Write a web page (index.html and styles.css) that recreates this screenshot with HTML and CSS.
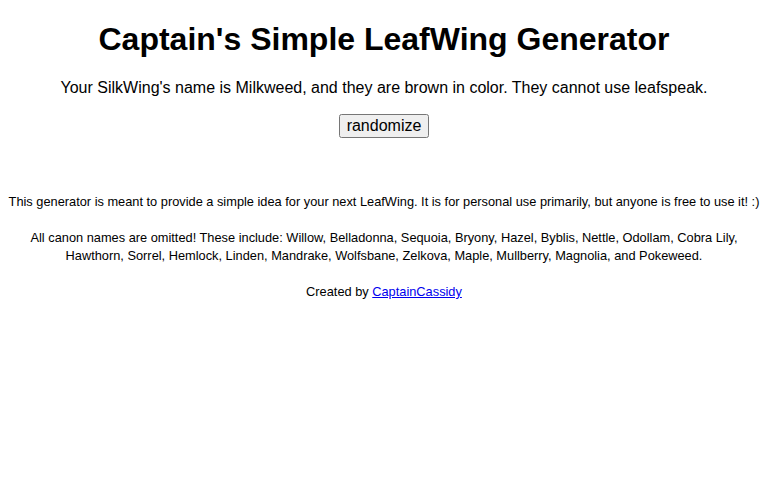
FILE: index.html
```html
<!DOCTYPE html>
<html>
<head>
<meta charset="utf-8">
<link rel="stylesheet" href="styles.css">
</head>
<body>
<div class="main">
<h1 class="title">Captain's Simple LeafWing Generator</h1>
<p class="result">Your SilkWing's name is Milkweed, and they are brown in color. They cannot use leafspeak.</p>
<button class="btn">randomize</button>
</div>
<div class="notes">This generator is meant to provide a simple idea for your next LeafWing. It is for personal use primarily, but anyone is free to use it! :)<br><br>All canon names are omitted! These include: Willow, Belladonna, Sequoia, Bryony, Hazel, Byblis, Nettle, Odollam, Cobra Lily, Hawthorn, Sorrel, Hemlock, Linden, Mandrake, Wolfsbane, Zelkova, Maple, Mullberry, Magnolia, and Pokeweed.<br><br>Created by <a href="#">CaptainCassidy</a></div>
</body>
</html>
```
FILE: styles.css
```css
body {
  margin: 0 8px;
  font-family: "Liberation Sans", Arial, sans-serif;
  text-align: center;
  color: #000;
  background: #fff;
}
.main {
  padding-top: 1px;
}
.title {
  font-size: 32px;
  margin: 20px 0 21px;
}
.result {
  font-size: 16px;
  margin: 16px 0 17px;
}
.btn {
  font-family: "Liberation Sans", Arial, sans-serif;
  font-size: 16px;
}
.notes {
  margin-top: 55px;
  font-size: 12.8px;
  line-height: 18px;
}
.notes a {
  color: #0000ee;
}
```
